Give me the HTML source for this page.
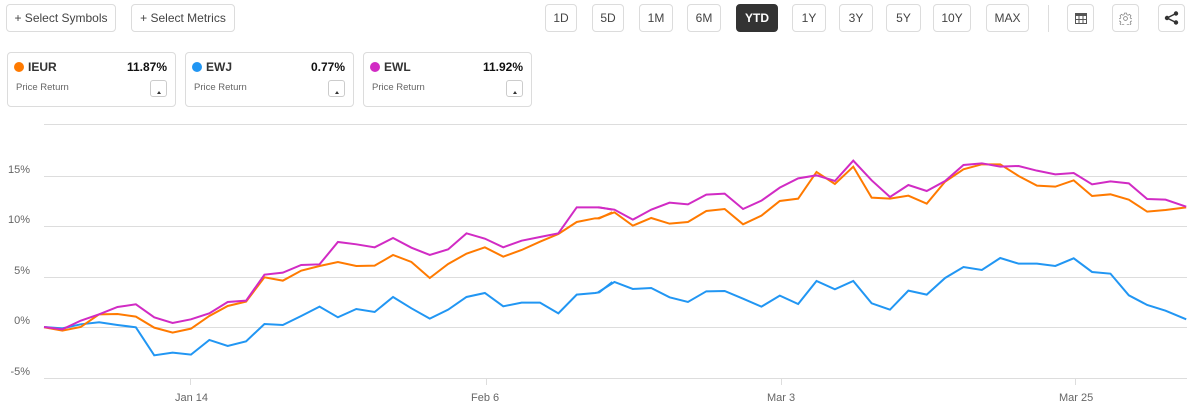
<!DOCTYPE html>
<html><head><meta charset="utf-8">
<style>
*{box-sizing:border-box;margin:0;padding:0}
body{width:1198px;height:413px;background:#fff;font-family:"Liberation Sans",Arial,sans-serif;position:relative;overflow:hidden;color:#333}
.btn{position:absolute;top:4px;height:28px;border:1px solid #dcdcdc;border-radius:4px;background:#fff;font-size:12px;color:#444;display:flex;align-items:center;justify-content:center}
.btn.act{background:#333;border-color:#333;color:#fff;font-weight:bold}
.card{position:absolute;top:52px;height:55px;border:1px solid #dcdcdc;border-radius:4px;background:#fff}
.card .dot{position:absolute;left:6px;top:9px;width:10px;height:10px;border-radius:50%}
.card .nm{position:absolute;left:20px;top:7px;font-size:12px;font-weight:bold;color:#333}
.card .pc{position:absolute;right:8px;top:7px;font-size:12px;font-weight:bold;color:#111}
.card .pr{position:absolute;left:8px;top:29px;font-size:9.5px;color:#666}
.card .mini{position:absolute;right:8px;top:27px;width:17px;height:17px;border:1px solid #ccc;border-radius:3px}
.card .mini:after{content:"";position:absolute;left:6px;top:10px;width:0;height:0;border-left:2px solid transparent;border-right:2px solid transparent;border-bottom:3px solid #333}
.yl{position:absolute;left:0;width:30px;text-align:right;font-size:11px;color:#666}
.xl{position:absolute;top:392px;font-size:11px;color:#666}
</style></head><body>
<div class="btn" style="left:6px;width:110px;font-size:12px">+ Select Symbols</div>
<div class="btn" style="left:131px;width:104px;font-size:12px">+ Select Metrics</div>

<div class="btn" style="left:545px;width:32px">1D</div>
<div class="btn" style="left:592px;width:32px">5D</div>
<div class="btn" style="left:639px;width:34px">1M</div>
<div class="btn" style="left:687px;width:34px">6M</div>
<div class="btn act" style="left:736px;width:42px">YTD</div>
<div class="btn" style="left:792px;width:34px">1Y</div>
<div class="btn" style="left:839px;width:34px">3Y</div>
<div class="btn" style="left:886px;width:35px">5Y</div>
<div class="btn" style="left:933px;width:38px">10Y</div>
<div class="btn" style="left:986px;width:43px">MAX</div>
<div style="position:absolute;left:1048px;top:5px;width:1px;height:27px;background:#ddd"></div>
<div class="btn" style="left:1067px;width:27px"><svg width="12" height="11" viewBox="0 0 12 11"><rect x="0.5" y="0.5" width="11" height="10" fill="none" stroke="#555"/><rect x="0" y="0" width="12" height="3" fill="#555"/><path d="M4 3v8M8 3v8M0 6.5h12" stroke="#555" stroke-width="1"/></svg></div>
<div class="btn" style="left:1112px;width:27px"><svg width="13" height="13" viewBox="0 0 24 24"><circle cx="12" cy="12" r="3.5" fill="none" stroke="#777" stroke-width="1.4"/><path d="M10 2h4l.6 3 2.2 1 2.6-1.7 2.8 2.8-1.7 2.6 1 2.2 3 .6v4l-3 .6-1 2.2 1.7 2.6-2.8 2.8-2.6-1.7-2.2 1-.6 3h-4l-.6-3-2.2-1-2.6 1.7-2.8-2.8 1.7-2.6-1-2.2-3-.6v-4l3-.6 1-2.2-1.7-2.6 2.8-2.8 2.6 1.7 2.2-1z" fill="none" stroke="#777" stroke-width="1.2"/></svg></div>
<div class="btn" style="left:1158px;width:27px"><svg width="15" height="14" viewBox="0 0 15 14"><path d="M12 2.5L3 7l9 4.5" fill="none" stroke="#333" stroke-width="1.5"/><circle cx="12" cy="2.5" r="2.2" fill="#333"/><circle cx="3" cy="7" r="2.2" fill="#333"/><circle cx="12" cy="11.5" r="2.2" fill="#333"/></svg></div>

<div class="card" style="left:7px;width:169px"><div class="dot" style="background:#ff7a00"></div><div class="nm">IEUR</div><div class="pc">11.87%</div><div class="pr">Price Return</div><div class="mini"></div></div>
<div class="card" style="left:185px;width:169px"><div class="dot" style="background:#2196f3"></div><div class="nm">EWJ</div><div class="pc">0.77%</div><div class="pr">Price Return</div><div class="mini"></div></div>
<div class="card" style="left:363px;width:169px"><div class="dot" style="background:#d12bc4"></div><div class="nm">EWL</div><div class="pc">11.92%</div><div class="pr">Price Return</div><div class="mini"></div></div>

<div class="yl" style="top:164px">15%</div>
<div class="yl" style="top:214px">10%</div>
<div class="yl" style="top:265px">5%</div>
<div class="yl" style="top:315px">0%</div>
<div class="yl" style="top:366px">-5%</div>
<div class="xl" style="left:175px">Jan 14</div>
<div class="xl" style="left:471px">Feb 6</div>
<div class="xl" style="left:767px">Mar 3</div>
<div class="xl" style="left:1059px">Mar 25</div>

<svg style="position:absolute;left:0;top:0" width="1198" height="413">
<g stroke="#ddd" stroke-width="1">
<path d="M44 124.5H1187M44 176.5H1187M44 226.5H1187M44 277.5H1187M44 327.5H1187M44 378.5H1187"/>
<path d="M190.5 379v6M486.5 379v6M781.5 379v6M1075.5 379v6"/>
</g>
<g transform="translate(0,115) scale(0.3827,0.3333)" fill="none">
<polyline vector-effect="non-scaling-stroke" stroke-width="2" stroke="#2196f3" points="115,636 163,640 211,628 259,622 307,630 355,637 403,721 451,713 499,719 547,675 595,693 643,679 691,627 739,630 787,603 835,575 883,607 931,582 979,591 1027,546 1075,580 1123,611 1171,584 1219,546 1267,534 1315,574 1363,563 1411,563 1459,595 1507,539 1555,534 1566,532 1600,501"/>
<polyline vector-effect="non-scaling-stroke" stroke-width="2" stroke="#ff7a00" points="115,637 163,647 211,636 259,598 307,597 355,605 403,638 451,653 499,641 547,603 595,573 643,560 691,487 739,497 787,467 835,453 883,441 931,453 979,452 1027,420 1075,441 1123,489 1171,447 1219,416 1267,397 1315,425 1363,405 1411,380 1459,357 1507,321 1555,310 1566,310 1600,292"/>
<polyline vector-effect="non-scaling-stroke" stroke-width="2" stroke="#d12bc4" points="115,636 163,643 211,617 259,598 307,576 355,568 403,607 451,624 499,613 547,595 595,561 643,557 691,479 739,473 787,450 835,448 883,381 931,388 979,397 1027,369 1075,398 1123,420 1171,403 1219,355 1267,371 1315,397 1363,377 1411,366 1459,355 1507,277 1555,277 1566,277 1600,284"/>
</g>
<g transform="translate(598,115) scale(0.3827,0.3333)" fill="none">
<polyline vector-effect="non-scaling-stroke" stroke-width="2" stroke="#2196f3" points="0,532 43,501 91,522 139,519 187,547 235,561 283,529 331,528 379,551 427,575 475,542 523,567 571,498 619,523 667,498 715,565 763,584 811,527 859,539 907,489 955,456 1003,465 1051,429 1099,446 1147,446 1195,453 1243,430 1291,471 1339,476 1387,541 1435,570 1483,587 1537,613"/>
<polyline vector-effect="non-scaling-stroke" stroke-width="2" stroke="#ff7a00" points="0,310 43,292 91,332 139,309 187,326 235,321 283,288 331,282 379,328 427,302 475,258 523,251 571,171 619,207 667,155 715,248 763,251 811,242 859,266 907,200 955,163 1003,148 1051,148 1099,183 1147,212 1195,215 1243,196 1291,243 1339,238 1387,254 1435,290 1483,285 1537,277"/>
<polyline vector-effect="non-scaling-stroke" stroke-width="2" stroke="#d12bc4" points="0,277 43,284 91,314 139,284 187,263 235,268 283,239 331,236 379,282 427,257 475,218 523,190 571,181 619,198 667,137 715,196 763,246 811,210 859,228 907,198 955,150 1003,145 1051,155 1099,153 1147,167 1195,178 1243,174 1291,208 1339,199 1387,205 1435,252 1483,254 1537,275"/>
</g>
</svg>
</body></html>
